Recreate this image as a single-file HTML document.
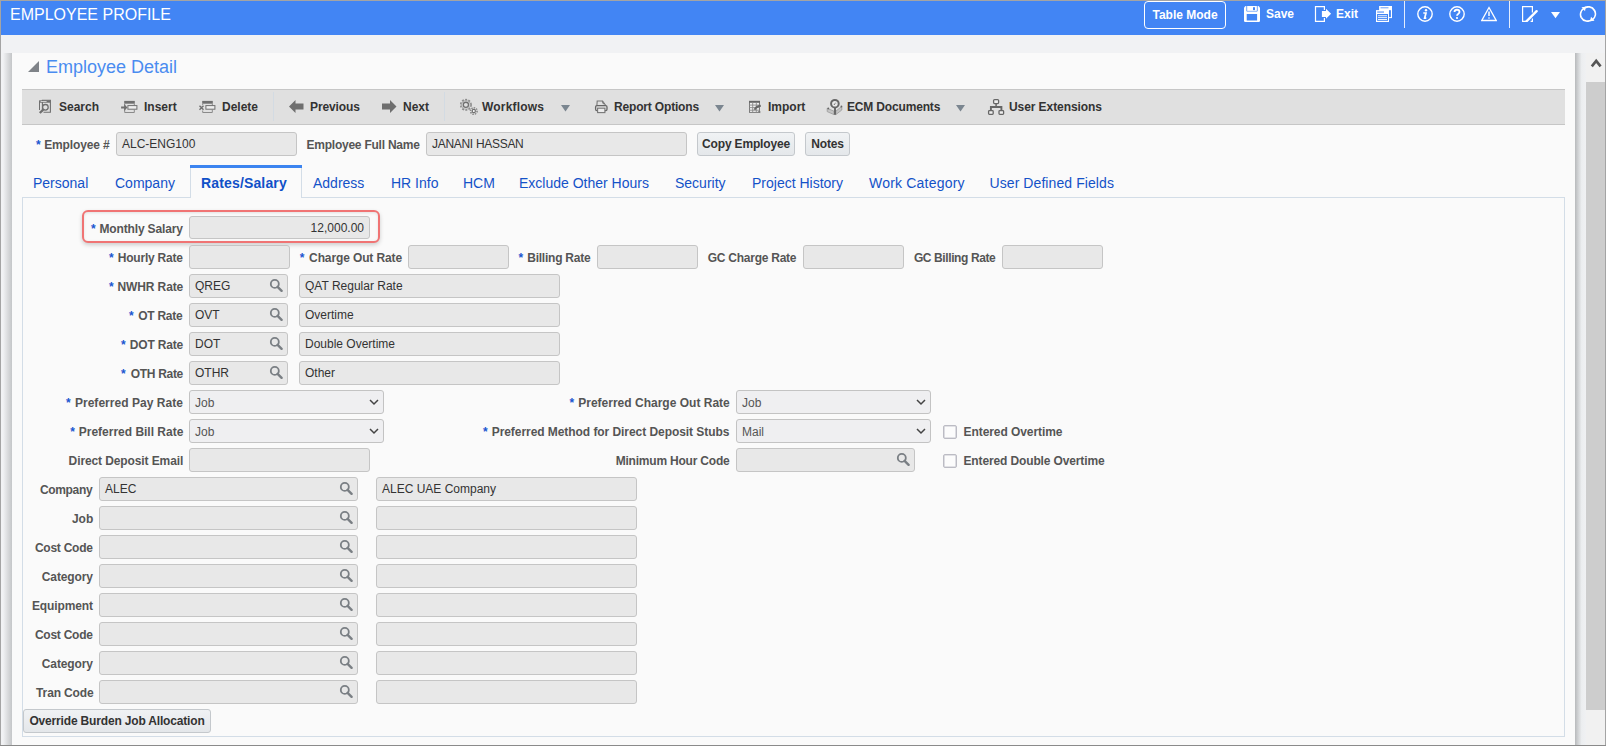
<!DOCTYPE html>
<html><head><meta charset="utf-8"><style>
html,body{margin:0;padding:0;}
body{width:1606px;height:746px;overflow:hidden;position:relative;font-family:"Liberation Sans", sans-serif;}
.t{position:absolute;white-space:nowrap;}
.b{position:absolute;}
</style></head><body>
<div class="b" style="left:0px;top:0px;width:1606px;height:746px;background:#f1f2f4;"></div>
<div class="b" style="left:3px;top:53px;width:9px;height:693px;background:linear-gradient(to right,#f1f2f4,#c4c6c8);"></div>
<div class="b" style="left:1575px;top:53px;width:11px;height:693px;background:linear-gradient(to right,#b8babc,#eceef0 60%,#f0f1f3);"></div>
<div class="b" style="left:12px;top:53px;width:1563px;height:693px;background:#fafafa;"></div>
<div class="b" style="left:1586px;top:53px;width:19px;height:693px;background:#f1f1f1;"></div>
<div class="b" style="left:1586px;top:82px;width:19px;height:628px;background:#cdcdcd;"></div>
<svg class="b" style="left:1590px;top:57px;" width="12" height="11" viewBox="0 0 12 11"><path d="M1.8 9.4 L6.2 3.9 L10.6 9.4" fill="none" stroke="#555" stroke-width="2.6"/></svg>
<div class="b" style="left:1px;top:1px;width:1604px;height:34px;background:#4285f4;"></div>
<div class="b" style="left:0px;top:0px;width:1606px;height:1px;background:#a4a4a4;"></div>
<div class="b" style="left:0px;top:0px;width:1px;height:746px;background:#a4a4a4;"></div>
<div class="b" style="left:1605px;top:0px;width:1px;height:746px;background:#a4a4a4;"></div>
<div class="b" style="left:0px;top:745px;width:1606px;height:1px;background:#8a8a8a;"></div>
<div class="t" style="left:10px;top:7.46px;font-size:16px;line-height:16px;font-weight:normal;color:#fff;">EMPLOYEE PROFILE</div>
<div class="b" style="left:1144px;top:1px;width:81px;height:26px;border:1px solid #fff;border-radius:4px;box-sizing:border-box;width:82px;height:28px;"></div>
<div class="t" style="left:1144px;width:82px;text-align:center;top:8.84px;font-size:12px;line-height:12px;font-weight:bold;color:#fff;">Table Mode</div>
<svg class="b" style="left:1244px;top:6px;" width="16" height="16" viewBox="0 0 16 16"><path d="M0 1.5 L1.5 0 H14.5 L16 1.5 V14.8 Q16 16 14.8 16 H1.2 Q0 16 0 14.8 Z" fill="#fff"/><rect x="2.2" y="0" width="1" height="5.3" fill="#4285f4" opacity=".75"/><rect x="12.8" y="0" width="1" height="5.3" fill="#4285f4" opacity=".75"/><rect x="3" y="4.8" width="10" height="1" fill="#4285f4" opacity=".6"/><rect x="9" y="1.2" width="2" height="2.9" fill="#4285f4"/><rect x="2.7" y="8" width="10.4" height="6.5" fill="#4285f4"/></svg>
<div class="t" style="left:1266px;top:7.84px;font-size:12px;line-height:12px;font-weight:bold;color:#fff;">Save</div>
<svg class="b" style="left:1314px;top:6px;" width="18" height="16" viewBox="0 0 18 16"><path d="M10.4 3.9 V0.6 H1.5 V15.4 H10.4 V11.9" fill="none" stroke="#fff" stroke-width="1.2"/><path d="M7.9 5.1 H12 V2.7 L17.1 7.8 L12 12.7 V10.9 H7.9 Z" fill="#fff"/></svg>
<div class="t" style="left:1336px;top:7.84px;font-size:12px;line-height:12px;font-weight:bold;color:#fff;">Exit</div>
<svg class="b" style="left:1376px;top:6px;" width="17" height="16" viewBox="0 0 17 16"><rect x="3.1" y="0" width="12.9" height="12.1" fill="#fff"/><rect x="4.5" y="1.3" width="8" height="1" fill="#4285f4" opacity=".8"/><rect x="13" y="4.2" width="1.9" height="6.9" fill="#4285f4"/><rect x="0" y="4.1" width="13" height="11.9" fill="#fff"/><rect x="1.2" y="5.4" width="6.8" height="1.3" fill="#4285f4" opacity=".8"/><rect x="1.1" y="8" width="10.9" height="6.8" fill="#4285f4"/><rect x="2" y="9.3" width="9" height="0.9" fill="#fff"/><rect x="2" y="11.2" width="9" height="0.9" fill="#fff"/><rect x="2" y="13.1" width="9" height="0.9" fill="#fff"/></svg>
<div class="b" style="left:1404px;top:1px;width:1px;height:27px;background:#fff;opacity:.85;"></div>
<svg class="b" style="left:1417px;top:6px;" width="16" height="16" viewBox="0 0 16 16"><circle cx="8" cy="8" r="7.2" fill="none" stroke="#fff" stroke-width="1.4"/><circle cx="9" cy="4.3" r="1.2" fill="#fff"/><path d="M6.3 7 H9 L7.6 12.2 H9.3" fill="none" stroke="#fff" stroke-width="1.7"/></svg>
<svg class="b" style="left:1449px;top:6px;" width="16" height="16" viewBox="0 0 16 16"><circle cx="8" cy="8" r="7.2" fill="none" stroke="#fff" stroke-width="1.4"/><path d="M5.5 6 C5.5 3 10.5 3 10.5 6 C10.5 7.8 8 8 8 9.8" fill="none" stroke="#fff" stroke-width="1.8"/><circle cx="8" cy="12" r="1.1" fill="#fff"/></svg>
<svg class="b" style="left:1481px;top:6px;" width="16" height="16" viewBox="0 0 16 16"><path d="M8 1.5 L15.2 14.5 H0.8 Z" fill="none" stroke="#fff" stroke-width="1.3"/><path d="M8 5.5 V10" stroke="#fff" stroke-width="1.5"/><circle cx="8" cy="12" r="0.8" fill="#fff"/></svg>
<div class="b" style="left:1509px;top:1px;width:1px;height:27px;background:#fff;opacity:.85;"></div>
<svg class="b" style="left:1522px;top:6px;" width="16" height="16" viewBox="0 0 16 16"><path d="M10.4 6.6 V0.6 H0.6 V15.4 H3.8 M8.6 15.4 H10.4 V12.4" fill="none" stroke="#fff" stroke-width="1.2"/><path d="M4.2 15.6 L14.6 5.2" stroke="#fff" stroke-width="2.4" stroke-linecap="round"/><path d="M3.6 16 L4.2 14.3 L5.4 15.5 Z" fill="#fff"/></svg>
<svg class="b" style="left:1551px;top:12px;" width="9" height="7" viewBox="0 0 9 7"><path d="M0 0 H9 L4.5 6.3 Z" fill="#fff"/></svg>
<svg class="b" style="left:1579px;top:6px;" width="18" height="16" viewBox="0 0 18 16"><path d="M4.6 2.6 A7.1 7.1 0 0 1 15.5 4.5 A7.1 7.1 0 0 1 13.5 13.6" fill="none" stroke="#fff" stroke-width="1.7"/><path d="M13.2 13.4 A7.1 7.1 0 0 1 2.2 11.3 A7.1 7.1 0 0 1 4.8 2.4" fill="none" stroke="#fff" stroke-width="1.7"/><path d="M2.5 1.3 L6.8 0.8 L6 5.2 Z" fill="#fff"/><path d="M15.5 14.8 L11.2 15.3 L12 10.8 Z" fill="#fff"/></svg>
<svg class="b" style="left:28px;top:61px;" width="12" height="12" viewBox="0 0 12 12"><path d="M11 0 V11 H0 Z" fill="#7f8388"/></svg>
<div class="t" style="left:46px;top:57.76px;font-size:18px;line-height:18px;font-weight:normal;color:#4a8cf0;">Employee Detail</div>
<div class="b" style="left:22px;top:89px;width:1543px;height:36px;background:#e0e0e0;border-top:1px solid #c6c6c6;border-bottom:1px solid #c6c6c6;box-sizing:border-box;"></div>
<svg class="b" style="left:38px;top:99px;" width="14" height="15" viewBox="0 0 14 15"><path d="M4.4 12.3 V1.3 H12.4 V13.3 H5.5" fill="none" stroke="#6f6f6f" stroke-width="1.1"/><rect x="1.6" y="1.3" width="11" height="2.4" fill="#6f6f6f"/><rect x="2.6" y="2" width="6" height="1" fill="#d0d0d0"/><path d="M1.5 1.5 V11" stroke="#6f6f6f" stroke-width="1"/><circle cx="7.4" cy="8.3" r="2.8" fill="none" stroke="#6f6f6f" stroke-width="1.3"/><path d="M5.4 10.5 L1.8 14" stroke="#6f6f6f" stroke-width="2.4"/></svg>
<div class="t" style="left:59px;top:100.84px;font-size:12px;line-height:12px;font-weight:bold;color:#333;letter-spacing:0px;">Search</div>
<svg class="b" style="left:120px;top:100px;" width="18" height="14" viewBox="0 0 18 14"><rect x="4.2" y="0.9" width="10.6" height="2.8" fill="#6f6f6f"/><path d="M4.7 3.7 V12.5 H14.3 V9.6 M14.3 5.7 V3.7" fill="none" stroke="#8a8a8a" stroke-width="1"/><rect x="7.9" y="5.6" width="9" height="3.6" fill="#eee" stroke="#6f6f6f" stroke-width="1"/><path d="M1.1 6.4 H4.4 V8.5 H1.1 Z M4.2 3.9 L7.4 7.4 L4.2 11 Z" fill="#6f6f6f"/></svg>
<div class="t" style="left:144px;top:100.84px;font-size:12px;line-height:12px;font-weight:bold;color:#333;letter-spacing:0px;">Insert</div>
<svg class="b" style="left:198px;top:100px;" width="18" height="14" viewBox="0 0 18 14"><rect x="4.2" y="0.9" width="10.6" height="2.8" fill="#6f6f6f"/><path d="M4.7 3.7 V5 M4.7 10.5 V12.5 H14.3 V9.6 M14.3 5.7 V3.7" fill="none" stroke="#8a8a8a" stroke-width="1"/><rect x="7.9" y="5.6" width="9" height="3.6" fill="#eee" stroke="#6f6f6f" stroke-width="1"/><path d="M1.5 5.8 L5.5 9.8 M5.5 5.8 L1.5 9.8" stroke="#6f6f6f" stroke-width="1.4"/></svg>
<div class="t" style="left:222px;top:100.84px;font-size:12px;line-height:12px;font-weight:bold;color:#333;letter-spacing:0px;">Delete</div>
<div class="b" style="left:273px;top:92px;width:1px;height:29px;background:#d3dbe3;"></div>
<svg class="b" style="left:289px;top:100px;" width="15" height="13" viewBox="0 0 15 13"><path d="M0 6.5 L6.5 0 V3.5 H14.5 V9.5 H6.5 V13 Z" fill="#6f6f6f"/></svg>
<div class="t" style="left:310px;top:100.84px;font-size:12px;line-height:12px;font-weight:bold;color:#333;letter-spacing:-0.1px;">Previous</div>
<svg class="b" style="left:382px;top:100px;" width="15" height="13" viewBox="0 0 15 13"><path d="M14.5 6.5 L8 0 V3.5 H0 V9.5 H8 V13 Z" fill="#6f6f6f"/></svg>
<div class="t" style="left:403px;top:100.84px;font-size:12px;line-height:12px;font-weight:bold;color:#333;letter-spacing:0px;">Next</div>
<div class="b" style="left:444px;top:92px;width:1px;height:29px;background:#d3dbe3;"></div>
<svg class="b" style="left:456px;top:96px;" width="22" height="22" viewBox="0 0 22 22"><circle cx="9.9" cy="8.85" r="5.2" fill="none" stroke="#8c8c8c" stroke-width="1.6" stroke-dasharray="2 1.3"/><circle cx="9.9" cy="8.85" r="4.3" fill="none" stroke="#9a9a9a" stroke-width="0.7"/><circle cx="9.9" cy="8.85" r="2.6" fill="none" stroke="#707070" stroke-width="1.3"/><circle cx="17.8" cy="15" r="3.3" fill="none" stroke="#8a8a8a" stroke-width="1.6" stroke-dasharray="1.5 1"/><circle cx="17.8" cy="15" r="1.6" fill="#fff" stroke="#707070" stroke-width="1.2"/></svg>
<div class="t" style="left:482px;top:100.84px;font-size:12px;line-height:12px;font-weight:bold;color:#333;letter-spacing:0.18px;">Workflows</div>
<svg class="b" style="left:561px;top:105px;" width="9" height="7" viewBox="0 0 9 7"><path d="M0 0 H9 L4.5 6.5 Z" fill="#7b8690"/></svg>
<svg class="b" style="left:590px;top:97px;" width="22" height="20" viewBox="0 0 22 20"><path d="M6.9 8.4 L7.2 4 H12.6 L15.6 8.2" fill="none" stroke="#777" stroke-width="1.1"/><path d="M12.3 4 L13 6.6 L14.6 6.9" fill="none" stroke="#777" stroke-width="1"/><rect x="5.6" y="8.7" width="11.4" height="4.9" rx="1.3" fill="none" stroke="#666" stroke-width="1.3"/><rect x="7.6" y="11.2" width="7.3" height="4.4" fill="#ececec" stroke="#777" stroke-width="1.1"/></svg>
<div class="t" style="left:614px;top:100.84px;font-size:12px;line-height:12px;font-weight:bold;color:#333;letter-spacing:-0.17px;">Report Options</div>
<svg class="b" style="left:715px;top:105px;" width="9" height="7" viewBox="0 0 9 7"><path d="M0 0 H9 L4.5 6.5 Z" fill="#7b8690"/></svg>
<svg class="b" style="left:745px;top:97px;" width="20" height="20" viewBox="0 0 20 20"><rect x="4.5" y="4.4" width="10" height="11" fill="#f0f0f0" stroke="#7a7a7a" stroke-width="1"/><rect x="4" y="3.9" width="11" height="1.9" fill="#666"/><path d="M7.7 5.5 V15.5 M11.3 5.5 V15.5 M4.5 8.1 H14.5 M4.5 10.6 H14.5 M4.5 13.2 H14.5" stroke="#8a8a8a" stroke-width="0.9"/><path d="M9.6 12.8 C10.5 10.2 13 9.2 15.8 8.8" fill="none" stroke="#666" stroke-width="1.9"/><path d="M12.6 14 L15.3 14 L15.3 16.2 Z" fill="#777"/></svg>
<div class="t" style="left:768px;top:100.84px;font-size:12px;line-height:12px;font-weight:bold;color:#333;letter-spacing:0px;">Import</div>
<svg class="b" style="left:824px;top:96px;" width="22" height="22" viewBox="0 0 22 22"><path d="M3.2 12.3 L10 15.2 L10 18.6 L3.2 15.6 Z" fill="#c4c4c4" stroke="#999" stroke-width="0.8"/><path d="M11.8 15.2 L17.8 10.4 L17.8 14 L11.8 18.6 Z" fill="#c4c4c4" stroke="#999" stroke-width="0.8"/><circle cx="4.3" cy="12.4" r="0.9" fill="#666"/><circle cx="17.4" cy="10.5" r="0.9" fill="#666"/><rect x="10" y="10.5" width="2" height="8.3" fill="#6a6a6a"/><circle cx="10.9" cy="7.7" r="3.8" fill="#eaeaea" stroke="#666" stroke-width="2"/><circle cx="10.4" cy="8.3" r="0.7" fill="#777"/><circle cx="11.7" cy="7.2" r="0.6" fill="#999"/></svg>
<div class="t" style="left:847px;top:100.84px;font-size:12px;line-height:12px;font-weight:bold;color:#333;letter-spacing:-0.17px;">ECM Documents</div>
<svg class="b" style="left:956px;top:105px;" width="9" height="7" viewBox="0 0 9 7"><path d="M0 0 H9 L4.5 6.5 Z" fill="#7b8690"/></svg>
<svg class="b" style="left:985px;top:97px;" width="22" height="20" viewBox="0 0 22 20"><rect x="8.6" y="2.6" width="5" height="4" rx="1" fill="#eee" stroke="#666" stroke-width="1.3"/><path d="M11.1 6.6 V9.6" stroke="#666" stroke-width="1.5"/><path d="M5.9 13.2 V10 H16.4 V13.2" fill="none" stroke="#666" stroke-width="1.9"/><rect x="3.6" y="13.6" width="4.6" height="3.8" rx="0.8" fill="#eee" stroke="#666" stroke-width="1.3"/><rect x="14" y="13.6" width="4.6" height="3.8" rx="0.8" fill="#eee" stroke="#666" stroke-width="1.3"/></svg>
<div class="t" style="left:1009px;top:100.84px;font-size:12px;line-height:12px;font-weight:bold;color:#333;letter-spacing:-0.08px;">User Extensions</div>
<div class="t" style="left:44.2px;top:138.84px;font-size:12px;line-height:12px;font-weight:bold;color:#555;letter-spacing:-0.133px;">Employee #</div>
<div class="t" style="left:35.9px;top:138.84px;font-size:12px;line-height:12px;font-weight:bold;color:#1a56d0;">*</div>
<div class="b" style="left:116px;top:132px;width:181px;height:24px;background:#e8e8e8;border:1px solid #c5c5c5;border-radius:3px;box-sizing:border-box;"></div>
<div class="t" style="left:122px;top:137.84px;font-size:12px;line-height:12px;font-weight:normal;color:#333;letter-spacing:0px;">ALC-ENG100</div>
<div class="t" style="left:306.5px;top:138.84px;font-size:12px;line-height:12px;font-weight:bold;color:#555;letter-spacing:-0.235px;">Employee Full Name</div>
<div class="b" style="left:426px;top:132px;width:261px;height:24px;background:#e8e8e8;border:1px solid #c5c5c5;border-radius:3px;box-sizing:border-box;"></div>
<div class="t" style="left:432px;top:137.84px;font-size:12px;line-height:12px;font-weight:normal;color:#333;letter-spacing:-0.3px;">JANANI HASSAN</div>
<div class="b" style="left:697px;top:132px;width:98px;height:24px;background:linear-gradient(#f0f2f4,#e4e7ea);border:1px solid #c4c8cc;border-radius:3px;box-sizing:border-box;"></div>
<div class="t" style="left:697px;top:137.84px;width:98px;text-align:center;font-size:12px;line-height:12px;font-weight:bold;color:#333;letter-spacing:-0.17px;">Copy Employee</div>
<div class="b" style="left:805px;top:132px;width:45px;height:24px;background:linear-gradient(#f0f2f4,#e4e7ea);border:1px solid #c4c8cc;border-radius:3px;box-sizing:border-box;"></div>
<div class="t" style="left:805px;top:137.84px;width:45px;text-align:center;font-size:12px;line-height:12px;font-weight:bold;color:#333;letter-spacing:-0.17px;">Notes</div>
<div class="b" style="left:22px;top:197px;width:1543px;height:540px;border:1px solid #d3dde7;box-sizing:border-box;background:#fafafa;"></div>
<div class="b" style="left:190px;top:165px;width:112px;height:33px;background:#fafafa;border:1px solid #d3dde7;border-bottom:none;box-sizing:border-box;"></div>
<div class="b" style="left:190px;top:165px;width:112px;height:3px;background:#3c84f0;"></div>
<div class="t" style="left:33px;top:176.15px;font-size:14px;line-height:14px;font-weight:normal;color:#1452c8;letter-spacing:0px;">Personal</div>
<div class="t" style="left:115px;top:176.15px;font-size:14px;line-height:14px;font-weight:normal;color:#1452c8;letter-spacing:0px;">Company</div>
<div class="t" style="left:313px;top:176.15px;font-size:14px;line-height:14px;font-weight:normal;color:#1452c8;letter-spacing:0px;">Address</div>
<div class="t" style="left:391px;top:176.15px;font-size:14px;line-height:14px;font-weight:normal;color:#1452c8;letter-spacing:0px;">HR Info</div>
<div class="t" style="left:463px;top:176.15px;font-size:14px;line-height:14px;font-weight:normal;color:#1452c8;letter-spacing:0px;">HCM</div>
<div class="t" style="left:519px;top:176.15px;font-size:14px;line-height:14px;font-weight:normal;color:#1452c8;letter-spacing:0px;">Exclude Other Hours</div>
<div class="t" style="left:675px;top:176.15px;font-size:14px;line-height:14px;font-weight:normal;color:#1452c8;letter-spacing:0px;">Security</div>
<div class="t" style="left:752px;top:176.15px;font-size:14px;line-height:14px;font-weight:normal;color:#1452c8;letter-spacing:0px;">Project History</div>
<div class="t" style="left:869px;top:176.15px;font-size:14px;line-height:14px;font-weight:normal;color:#1452c8;letter-spacing:0.2px;">Work Category</div>
<div class="t" style="left:989.5px;top:176.15px;font-size:14px;line-height:14px;font-weight:normal;color:#1452c8;letter-spacing:0.08px;">User Defined Fields</div>
<div class="t" style="left:201px;top:176.15px;font-size:14px;line-height:14px;font-weight:bold;color:#1050c8;letter-spacing:0.15px;">Rates/Salary</div>
<div class="b" style="left:82px;top:210px;width:298px;height:33px;border:2px solid #f07474;border-radius:6px;box-sizing:border-box;box-shadow:0 2px 4px rgba(0,0,0,.18), inset 0 1px 3px rgba(0,0,0,.10);background:#fafafa;"></div>
<div class="t" style="left:99.4px;top:222.84px;font-size:12px;line-height:12px;font-weight:bold;color:#555;letter-spacing:-0.138px;">Monthly Salary</div>
<div class="t" style="left:91px;top:222.84px;font-size:12px;line-height:12px;font-weight:bold;color:#1a56d0;">*</div>
<div class="b" style="left:189px;top:216px;width:181px;height:23px;background:#e8e8e8;border:1px solid #c5c5c5;border-radius:3px;box-sizing:border-box;"></div>
<div class="t" style="left:-236px;width:600px;text-align:right;top:221.84px;font-size:12px;line-height:12px;font-weight:normal;color:#333;">12,000.00</div>
<div class="t" style="left:117.8px;top:251.84px;font-size:12px;line-height:12px;font-weight:bold;color:#555;letter-spacing:-0.220px;">Hourly Rate</div>
<div class="t" style="left:108.9px;top:251.84px;font-size:12px;line-height:12px;font-weight:bold;color:#1a56d0;">*</div>
<div class="b" style="left:189px;top:245px;width:101px;height:24px;background:#e8e8e8;border:1px solid #c5c5c5;border-radius:3px;box-sizing:border-box;"></div>
<div class="t" style="left:309.1px;top:251.84px;font-size:12px;line-height:12px;font-weight:bold;color:#555;letter-spacing:-0.121px;">Charge Out Rate</div>
<div class="t" style="left:299.7px;top:251.84px;font-size:12px;line-height:12px;font-weight:bold;color:#1a56d0;">*</div>
<div class="b" style="left:408px;top:245px;width:101px;height:24px;background:#e8e8e8;border:1px solid #c5c5c5;border-radius:3px;box-sizing:border-box;"></div>
<div class="t" style="left:527.2px;top:251.84px;font-size:12px;line-height:12px;font-weight:bold;color:#555;letter-spacing:-0.227px;">Billing Rate</div>
<div class="t" style="left:518.5px;top:251.84px;font-size:12px;line-height:12px;font-weight:bold;color:#1a56d0;">*</div>
<div class="b" style="left:597px;top:245px;width:101px;height:24px;background:#e8e8e8;border:1px solid #c5c5c5;border-radius:3px;box-sizing:border-box;"></div>
<div class="t" style="left:707.7px;top:251.84px;font-size:12px;line-height:12px;font-weight:bold;color:#555;letter-spacing:-0.246px;">GC Charge Rate</div>
<div class="b" style="left:803px;top:245px;width:101px;height:24px;background:#e8e8e8;border:1px solid #c5c5c5;border-radius:3px;box-sizing:border-box;"></div>
<div class="t" style="left:913.9px;top:251.84px;font-size:12px;line-height:12px;font-weight:bold;color:#555;letter-spacing:-0.393px;">GC Billing Rate</div>
<div class="b" style="left:1002px;top:245px;width:101px;height:24px;background:#e8e8e8;border:1px solid #c5c5c5;border-radius:3px;box-sizing:border-box;"></div>
<div class="t" style="left:117.5px;top:280.84px;font-size:12px;line-height:12px;font-weight:bold;color:#555;letter-spacing:-0.113px;">NWHR Rate</div>
<div class="t" style="left:109px;top:280.84px;font-size:12px;line-height:12px;font-weight:bold;color:#1a56d0;">*</div>
<div class="b" style="left:189px;top:274px;width:99px;height:24px;background:#e8e8e8;border:1px solid #c5c5c5;border-radius:3px;box-sizing:border-box;"></div>
<div class="t" style="left:195px;top:279.84px;font-size:12px;line-height:12px;font-weight:normal;color:#333;letter-spacing:0px;">QREG</div>
<svg class="b" style="left:269px;top:278px;" width="14" height="16" viewBox="0 0 14 16"><circle cx="5.8" cy="5.9" r="4" fill="none" stroke="#7a7f84" stroke-width="1.8"/><path d="M8.6 8.8 L12.6 12.8" stroke="#7a7f84" stroke-width="2.4" stroke-linecap="round"/></svg>
<div class="b" style="left:299px;top:274px;width:261px;height:24px;background:#e8e8e8;border:1px solid #c5c5c5;border-radius:3px;box-sizing:border-box;"></div>
<div class="t" style="left:305px;top:279.84px;font-size:12px;line-height:12px;font-weight:normal;color:#333;letter-spacing:0px;">QAT Regular Rate</div>
<div class="t" style="left:138.3px;top:309.84px;font-size:12px;line-height:12px;font-weight:bold;color:#555;letter-spacing:-0.283px;">OT Rate</div>
<div class="t" style="left:129px;top:309.84px;font-size:12px;line-height:12px;font-weight:bold;color:#1a56d0;">*</div>
<div class="b" style="left:189px;top:303px;width:99px;height:24px;background:#e8e8e8;border:1px solid #c5c5c5;border-radius:3px;box-sizing:border-box;"></div>
<div class="t" style="left:195px;top:308.84px;font-size:12px;line-height:12px;font-weight:normal;color:#333;letter-spacing:0px;">OVT</div>
<svg class="b" style="left:269px;top:307px;" width="14" height="16" viewBox="0 0 14 16"><circle cx="5.8" cy="5.9" r="4" fill="none" stroke="#7a7f84" stroke-width="1.8"/><path d="M8.6 8.8 L12.6 12.8" stroke="#7a7f84" stroke-width="2.4" stroke-linecap="round"/></svg>
<div class="b" style="left:299px;top:303px;width:261px;height:24px;background:#e8e8e8;border:1px solid #c5c5c5;border-radius:3px;box-sizing:border-box;"></div>
<div class="t" style="left:305px;top:308.84px;font-size:12px;line-height:12px;font-weight:normal;color:#333;letter-spacing:0px;">Overtime</div>
<div class="t" style="left:129.8px;top:338.84px;font-size:12px;line-height:12px;font-weight:bold;color:#555;letter-spacing:-0.171px;">DOT Rate</div>
<div class="t" style="left:120.9px;top:338.84px;font-size:12px;line-height:12px;font-weight:bold;color:#1a56d0;">*</div>
<div class="b" style="left:189px;top:332px;width:99px;height:24px;background:#e8e8e8;border:1px solid #c5c5c5;border-radius:3px;box-sizing:border-box;"></div>
<div class="t" style="left:195px;top:337.84px;font-size:12px;line-height:12px;font-weight:normal;color:#333;letter-spacing:0px;">DOT</div>
<svg class="b" style="left:269px;top:336px;" width="14" height="16" viewBox="0 0 14 16"><circle cx="5.8" cy="5.9" r="4" fill="none" stroke="#7a7f84" stroke-width="1.8"/><path d="M8.6 8.8 L12.6 12.8" stroke="#7a7f84" stroke-width="2.4" stroke-linecap="round"/></svg>
<div class="b" style="left:299px;top:332px;width:261px;height:24px;background:#e8e8e8;border:1px solid #c5c5c5;border-radius:3px;box-sizing:border-box;"></div>
<div class="t" style="left:305px;top:337.84px;font-size:12px;line-height:12px;font-weight:normal;color:#333;letter-spacing:0px;">Double Overtime</div>
<div class="t" style="left:130.8px;top:367.84px;font-size:12px;line-height:12px;font-weight:bold;color:#555;letter-spacing:-0.314px;">OTH Rate</div>
<div class="t" style="left:120.9px;top:367.84px;font-size:12px;line-height:12px;font-weight:bold;color:#1a56d0;">*</div>
<div class="b" style="left:189px;top:361px;width:99px;height:24px;background:#e8e8e8;border:1px solid #c5c5c5;border-radius:3px;box-sizing:border-box;"></div>
<div class="t" style="left:195px;top:366.84px;font-size:12px;line-height:12px;font-weight:normal;color:#333;letter-spacing:0px;">OTHR</div>
<svg class="b" style="left:269px;top:365px;" width="14" height="16" viewBox="0 0 14 16"><circle cx="5.8" cy="5.9" r="4" fill="none" stroke="#7a7f84" stroke-width="1.8"/><path d="M8.6 8.8 L12.6 12.8" stroke="#7a7f84" stroke-width="2.4" stroke-linecap="round"/></svg>
<div class="b" style="left:299px;top:361px;width:261px;height:24px;background:#e8e8e8;border:1px solid #c5c5c5;border-radius:3px;box-sizing:border-box;"></div>
<div class="t" style="left:305px;top:366.84px;font-size:12px;line-height:12px;font-weight:normal;color:#333;letter-spacing:0px;">Other</div>
<div class="t" style="left:74.9px;top:396.84px;font-size:12px;line-height:12px;font-weight:bold;color:#555;letter-spacing:0.041px;">Preferred Pay Rate</div>
<div class="t" style="left:66px;top:396.84px;font-size:12px;line-height:12px;font-weight:bold;color:#1a56d0;">*</div>
<div class="b" style="left:189px;top:390px;width:195px;height:24px;background:#efeff1;border:1px solid #c3c3c3;border-radius:3px;box-sizing:border-box;"></div>
<div class="t" style="left:195px;top:396.84px;font-size:12px;line-height:12px;font-weight:normal;color:#555;">Job</div>
<svg class="b" style="left:369px;top:399px;" width="10" height="7" viewBox="0 0 10 7"><path d="M1 1 L5 5 L9 1" fill="none" stroke="#444" stroke-width="1.5"/></svg>
<div class="t" style="left:578.2px;top:396.84px;font-size:12px;line-height:12px;font-weight:bold;color:#555;letter-spacing:0.008px;">Preferred Charge Out Rate</div>
<div class="t" style="left:569.5px;top:396.84px;font-size:12px;line-height:12px;font-weight:bold;color:#1a56d0;">*</div>
<div class="b" style="left:736px;top:390px;width:195px;height:24px;background:#efeff1;border:1px solid #c3c3c3;border-radius:3px;box-sizing:border-box;"></div>
<div class="t" style="left:742px;top:396.84px;font-size:12px;line-height:12px;font-weight:normal;color:#555;">Job</div>
<svg class="b" style="left:916px;top:399px;" width="10" height="7" viewBox="0 0 10 7"><path d="M1 1 L5 5 L9 1" fill="none" stroke="#444" stroke-width="1.5"/></svg>
<div class="t" style="left:78.8px;top:425.84px;font-size:12px;line-height:12px;font-weight:bold;color:#555;letter-spacing:-0.011px;">Preferred Bill Rate</div>
<div class="t" style="left:70.2px;top:425.84px;font-size:12px;line-height:12px;font-weight:bold;color:#1a56d0;">*</div>
<div class="b" style="left:189px;top:419px;width:195px;height:24px;background:#efeff1;border:1px solid #c3c3c3;border-radius:3px;box-sizing:border-box;"></div>
<div class="t" style="left:195px;top:425.84px;font-size:12px;line-height:12px;font-weight:normal;color:#555;">Job</div>
<svg class="b" style="left:369px;top:428px;" width="10" height="7" viewBox="0 0 10 7"><path d="M1 1 L5 5 L9 1" fill="none" stroke="#444" stroke-width="1.5"/></svg>
<div class="t" style="left:491.7px;top:425.84px;font-size:12px;line-height:12px;font-weight:bold;color:#555;letter-spacing:-0.058px;">Preferred Method for Direct Deposit Stubs</div>
<div class="t" style="left:483.1px;top:425.84px;font-size:12px;line-height:12px;font-weight:bold;color:#1a56d0;">*</div>
<div class="b" style="left:736px;top:419px;width:195px;height:24px;background:#efeff1;border:1px solid #c3c3c3;border-radius:3px;box-sizing:border-box;"></div>
<div class="t" style="left:742px;top:425.84px;font-size:12px;line-height:12px;font-weight:normal;color:#555;">Mail</div>
<svg class="b" style="left:916px;top:428px;" width="10" height="7" viewBox="0 0 10 7"><path d="M1 1 L5 5 L9 1" fill="none" stroke="#444" stroke-width="1.5"/></svg>
<div class="b" style="left:943px;top:425px;width:14px;height:14px;background:#fcfcfc;border:1px solid #bcbcc4;box-shadow:inset 0 0 0 0.6px #c8c8d0;box-sizing:border-box;border-radius:2px;"></div>
<div class="t" style="left:963.5px;top:425.84px;font-size:12px;line-height:12px;font-weight:bold;color:#555;letter-spacing:-0.067px;">Entered Overtime</div>
<div class="t" style="left:68.6px;top:454.84px;font-size:12px;line-height:12px;font-weight:bold;color:#555;letter-spacing:-0.105px;">Direct Deposit Email</div>
<div class="b" style="left:189px;top:448px;width:181px;height:24px;background:#e8e8e8;border:1px solid #c5c5c5;border-radius:3px;box-sizing:border-box;"></div>
<div class="t" style="left:615.7px;top:454.84px;font-size:12px;line-height:12px;font-weight:bold;color:#555;letter-spacing:-0.206px;">Minimum Hour Code</div>
<div class="b" style="left:736px;top:448px;width:179px;height:24px;background:#e8e8e8;border:1px solid #c5c5c5;border-radius:3px;box-sizing:border-box;"></div>
<svg class="b" style="left:896px;top:452px;" width="14" height="16" viewBox="0 0 14 16"><circle cx="5.8" cy="5.9" r="4" fill="none" stroke="#7a7f84" stroke-width="1.8"/><path d="M8.6 8.8 L12.6 12.8" stroke="#7a7f84" stroke-width="2.4" stroke-linecap="round"/></svg>
<div class="b" style="left:943px;top:454px;width:14px;height:14px;background:#fcfcfc;border:1px solid #bcbcc4;box-shadow:inset 0 0 0 0.6px #c8c8d0;box-sizing:border-box;border-radius:2px;"></div>
<div class="t" style="left:963.5px;top:454.84px;font-size:12px;line-height:12px;font-weight:bold;color:#555;letter-spacing:-0.132px;">Entered Double Overtime</div>
<div class="t" style="left:39.9px;top:483.84px;font-size:12px;line-height:12px;font-weight:bold;color:#555;letter-spacing:-0.333px;">Company</div>
<div class="b" style="left:99px;top:477px;width:259px;height:24px;background:#e8e8e8;border:1px solid #c5c5c5;border-radius:3px;box-sizing:border-box;"></div>
<div class="t" style="left:105px;top:482.84px;font-size:12px;line-height:12px;font-weight:normal;color:#333;letter-spacing:0px;">ALEC</div>
<svg class="b" style="left:339px;top:481px;" width="14" height="16" viewBox="0 0 14 16"><circle cx="5.8" cy="5.9" r="4" fill="none" stroke="#7a7f84" stroke-width="1.8"/><path d="M8.6 8.8 L12.6 12.8" stroke="#7a7f84" stroke-width="2.4" stroke-linecap="round"/></svg>
<div class="b" style="left:376px;top:477px;width:261px;height:24px;background:#e8e8e8;border:1px solid #c5c5c5;border-radius:3px;box-sizing:border-box;"></div>
<div class="t" style="left:382px;top:482.84px;font-size:12px;line-height:12px;font-weight:normal;color:#333;letter-spacing:0px;">ALEC UAE Company</div>
<div class="t" style="left:71.9px;top:512.84px;font-size:12px;line-height:12px;font-weight:bold;color:#555;letter-spacing:0.000px;">Job</div>
<div class="b" style="left:99px;top:506px;width:259px;height:24px;background:#e8e8e8;border:1px solid #c5c5c5;border-radius:3px;box-sizing:border-box;"></div>
<svg class="b" style="left:339px;top:510px;" width="14" height="16" viewBox="0 0 14 16"><circle cx="5.8" cy="5.9" r="4" fill="none" stroke="#7a7f84" stroke-width="1.8"/><path d="M8.6 8.8 L12.6 12.8" stroke="#7a7f84" stroke-width="2.4" stroke-linecap="round"/></svg>
<div class="b" style="left:376px;top:506px;width:261px;height:24px;background:#e8e8e8;border:1px solid #c5c5c5;border-radius:3px;box-sizing:border-box;"></div>
<div class="t" style="left:34.9px;top:541.84px;font-size:12px;line-height:12px;font-weight:bold;color:#555;letter-spacing:-0.250px;">Cost Code</div>
<div class="b" style="left:99px;top:535px;width:259px;height:24px;background:#e8e8e8;border:1px solid #c5c5c5;border-radius:3px;box-sizing:border-box;"></div>
<svg class="b" style="left:339px;top:539px;" width="14" height="16" viewBox="0 0 14 16"><circle cx="5.8" cy="5.9" r="4" fill="none" stroke="#7a7f84" stroke-width="1.8"/><path d="M8.6 8.8 L12.6 12.8" stroke="#7a7f84" stroke-width="2.4" stroke-linecap="round"/></svg>
<div class="b" style="left:376px;top:535px;width:261px;height:24px;background:#e8e8e8;border:1px solid #c5c5c5;border-radius:3px;box-sizing:border-box;"></div>
<div class="t" style="left:41.8px;top:570.84px;font-size:12px;line-height:12px;font-weight:bold;color:#555;letter-spacing:-0.129px;">Category</div>
<div class="b" style="left:99px;top:564px;width:259px;height:24px;background:#e8e8e8;border:1px solid #c5c5c5;border-radius:3px;box-sizing:border-box;"></div>
<svg class="b" style="left:339px;top:568px;" width="14" height="16" viewBox="0 0 14 16"><circle cx="5.8" cy="5.9" r="4" fill="none" stroke="#7a7f84" stroke-width="1.8"/><path d="M8.6 8.8 L12.6 12.8" stroke="#7a7f84" stroke-width="2.4" stroke-linecap="round"/></svg>
<div class="b" style="left:376px;top:564px;width:261px;height:24px;background:#e8e8e8;border:1px solid #c5c5c5;border-radius:3px;box-sizing:border-box;"></div>
<div class="t" style="left:32.0px;top:599.84px;font-size:12px;line-height:12px;font-weight:bold;color:#555;letter-spacing:-0.137px;">Equipment</div>
<div class="b" style="left:99px;top:593px;width:259px;height:24px;background:#e8e8e8;border:1px solid #c5c5c5;border-radius:3px;box-sizing:border-box;"></div>
<svg class="b" style="left:339px;top:597px;" width="14" height="16" viewBox="0 0 14 16"><circle cx="5.8" cy="5.9" r="4" fill="none" stroke="#7a7f84" stroke-width="1.8"/><path d="M8.6 8.8 L12.6 12.8" stroke="#7a7f84" stroke-width="2.4" stroke-linecap="round"/></svg>
<div class="b" style="left:376px;top:593px;width:261px;height:24px;background:#e8e8e8;border:1px solid #c5c5c5;border-radius:3px;box-sizing:border-box;"></div>
<div class="t" style="left:34.9px;top:628.84px;font-size:12px;line-height:12px;font-weight:bold;color:#555;letter-spacing:-0.250px;">Cost Code</div>
<div class="b" style="left:99px;top:622px;width:259px;height:24px;background:#e8e8e8;border:1px solid #c5c5c5;border-radius:3px;box-sizing:border-box;"></div>
<svg class="b" style="left:339px;top:626px;" width="14" height="16" viewBox="0 0 14 16"><circle cx="5.8" cy="5.9" r="4" fill="none" stroke="#7a7f84" stroke-width="1.8"/><path d="M8.6 8.8 L12.6 12.8" stroke="#7a7f84" stroke-width="2.4" stroke-linecap="round"/></svg>
<div class="b" style="left:376px;top:622px;width:261px;height:24px;background:#e8e8e8;border:1px solid #c5c5c5;border-radius:3px;box-sizing:border-box;"></div>
<div class="t" style="left:41.8px;top:657.84px;font-size:12px;line-height:12px;font-weight:bold;color:#555;letter-spacing:-0.129px;">Category</div>
<div class="b" style="left:99px;top:651px;width:259px;height:24px;background:#e8e8e8;border:1px solid #c5c5c5;border-radius:3px;box-sizing:border-box;"></div>
<svg class="b" style="left:339px;top:655px;" width="14" height="16" viewBox="0 0 14 16"><circle cx="5.8" cy="5.9" r="4" fill="none" stroke="#7a7f84" stroke-width="1.8"/><path d="M8.6 8.8 L12.6 12.8" stroke="#7a7f84" stroke-width="2.4" stroke-linecap="round"/></svg>
<div class="b" style="left:376px;top:651px;width:261px;height:24px;background:#e8e8e8;border:1px solid #c5c5c5;border-radius:3px;box-sizing:border-box;"></div>
<div class="t" style="left:36.1px;top:686.84px;font-size:12px;line-height:12px;font-weight:bold;color:#555;letter-spacing:-0.150px;">Tran Code</div>
<div class="b" style="left:99px;top:680px;width:259px;height:24px;background:#e8e8e8;border:1px solid #c5c5c5;border-radius:3px;box-sizing:border-box;"></div>
<svg class="b" style="left:339px;top:684px;" width="14" height="16" viewBox="0 0 14 16"><circle cx="5.8" cy="5.9" r="4" fill="none" stroke="#7a7f84" stroke-width="1.8"/><path d="M8.6 8.8 L12.6 12.8" stroke="#7a7f84" stroke-width="2.4" stroke-linecap="round"/></svg>
<div class="b" style="left:376px;top:680px;width:261px;height:24px;background:#e8e8e8;border:1px solid #c5c5c5;border-radius:3px;box-sizing:border-box;"></div>
<div class="b" style="left:23px;top:709px;width:188px;height:24px;background:linear-gradient(#f0f2f4,#e4e7ea);border:1px solid #c4c8cc;border-radius:3px;box-sizing:border-box;"></div>
<div class="t" style="left:23px;top:714.84px;width:188px;text-align:center;font-size:12px;line-height:12px;font-weight:bold;color:#333;letter-spacing:-0.17px;">Override Burden Job Allocation</div>
</body></html>
